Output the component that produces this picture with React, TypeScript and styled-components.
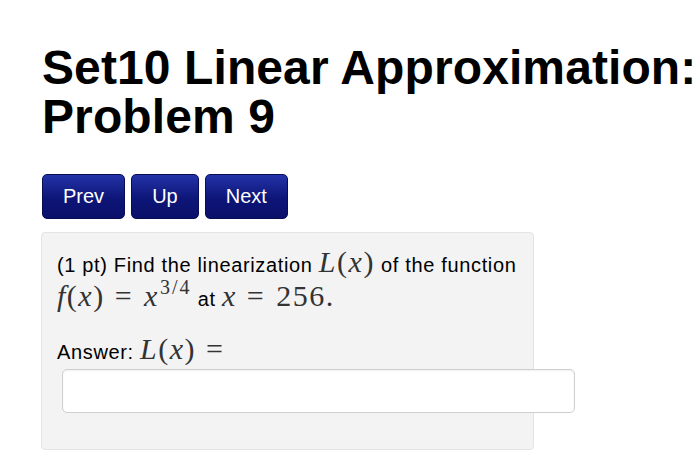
import styled, { createGlobalStyle } from "styled-components";

const GlobalStyle = createGlobalStyle`
  html, body {
    margin: 0;
    padding: 0;
    background: #ffffff;
    overflow: hidden;
  }
  body {
    font-family: "Liberation Sans", Arial, sans-serif;
    color: #000000;
  }
`;

const Page = styled.div`
  width: 700px;
  height: 460px;
  padding: 43px 0 0 42px;
  box-sizing: border-box;
  overflow: hidden;
`;

const Title = styled.h1`
  margin: 0;
  font-size: 48px;
  line-height: 49px;
  font-weight: 700;
  white-space: nowrap;
  letter-spacing: 0.1px;
`;

const Nav = styled.div`
  display: flex;
  gap: 6px;
  margin-top: 33px;
`;

const NavButton = styled.button`
  height: 45px;
  padding: 0 20px;
  font-family: "Liberation Sans", Arial, sans-serif;
  font-size: 20px;
  color: #ffffff;
  background: linear-gradient(#2333a8, #0d1577 55%, #0a106a);
  border: 1px solid #080d55;
  border-radius: 5px;
  cursor: pointer;
`;

const ProblemBox = styled.div`
  margin-top: 13px;
  margin-left: -1px;
  width: 493px;
  height: 218px;
  box-sizing: border-box;
  padding: 15px 0 0 15px;
  background: #f3f3f3;
  border: 1px solid #e4e4e4;
  border-radius: 4px;
`;

const Para = styled.p`
  margin: 0;
  font-size: 20px;
  line-height: 34px;
  letter-spacing: 0.65px;
  white-space: nowrap;
`;

const AnswerLine = styled(Para)`
  margin-top: 19px;
`;

const Math = styled.span`
  font-family: "Liberation Serif", "Times New Roman", serif;
  font-size: 30px;
  line-height: 0;
  color: #333333;
  letter-spacing: 1.5px;
`;

const Var = styled.i`
  font-style: italic;
`;

const Op = styled.span`
  margin: 0 11px 0 10px;
`;

const Sup = styled.sup`
  font-size: 20px;
  letter-spacing: 2px;
  vertical-align: 12px;
  line-height: 0;
  margin-left: 1px;
`;

const AnswerInput = styled.input`
  display: block;
  margin-left: 5px;
  width: 513px;
  height: 44px;
  box-sizing: border-box;
  border: 1px solid #cfcfcf;
  border-radius: 5px;
  background: #ffffff;
  box-shadow: inset 0 1px 2px rgba(0, 0, 0, 0.06);
  font-size: 18px;
  outline: none;
`;

export default function App() {
  return (
    <>
      <GlobalStyle />
      <Page>
        <Title>
          Set10 Linear Approximation:
          <br />
          Problem 9
        </Title>
        <Nav>
          <NavButton>Prev</NavButton>
          <NavButton>Up</NavButton>
          <NavButton>Next</NavButton>
        </Nav>
        <ProblemBox>
          <Para>
            (1 pt) Find the linearization{" "}
            <Math>
              <Var>L</Var>(<Var>x</Var>)
            </Math>
            {" "}of the function
          </Para>
          <Para>
            <Math>
              <Var>f</Var>(<Var>x</Var>)<Op>=</Op>
              <Var>x</Var>
              <Sup>3/4</Sup>
            </Math>
            {" "}at{" "}
            <Math>
              <Var>x</Var>
              <Op>=</Op>256.
            </Math>
          </Para>
          <AnswerLine>
            Answer:{" "}
            <Math>
              <Var>L</Var>(<Var>x</Var>)<Op>=</Op>
            </Math>
          </AnswerLine>
          <AnswerInput type="text" />
        </ProblemBox>
      </Page>
    </>
  );
}
